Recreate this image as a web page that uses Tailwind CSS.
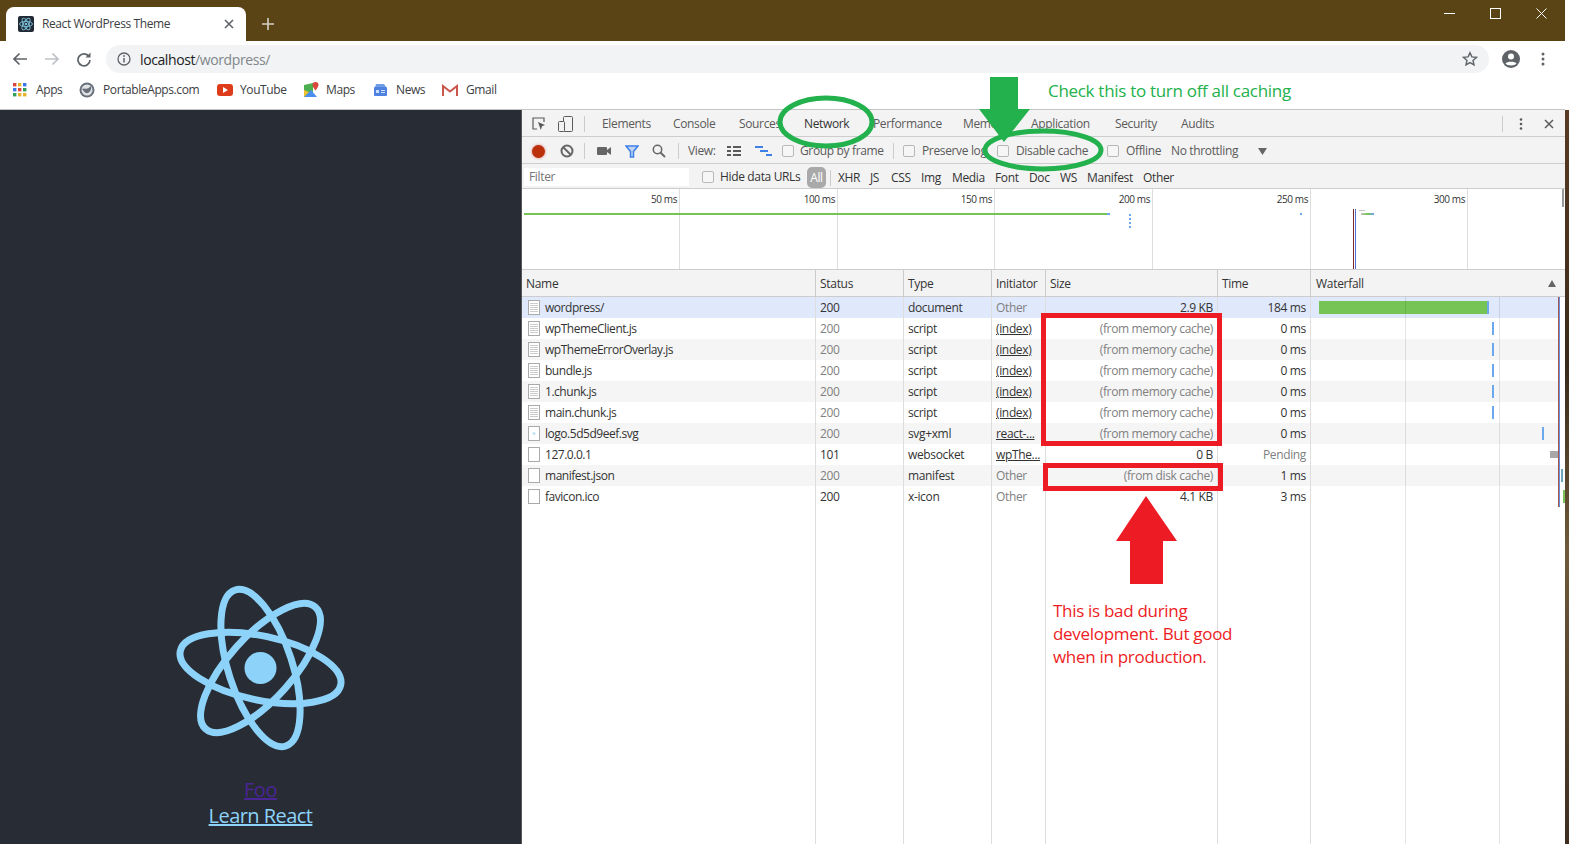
<!DOCTYPE html>
<html>
<head>
<meta charset="utf-8">
<script src="https://cdn.jsdelivr.net/npm/@tailwindcss/browser@4"></script>
</head>
<body class="m-0 bg-white">
<div class="relative w-[1569px] h-[844px] overflow-hidden bg-white font-['Open_Sans','Noto_Sans',sans-serif] text-[12px] text-[#333]">

  <!-- Title bar -->
  <div class="flex h-[41px] w-[1565px] bg-[#5a4415]">
    <div class="ml-[6px] mt-[7px] flex h-[34px] w-[240px] items-center rounded-t-[8px] bg-white pl-[12px] pr-[12px]">
      <svg width="16" height="16" viewBox="0 0 16 16" class="shrink-0"><rect width="16" height="16" rx="2" fill="#222b35"/><g fill="none" stroke="#7cc4dd" stroke-width="0.9"><ellipse cx="8" cy="8" rx="6.5" ry="2.6"/><ellipse cx="8" cy="8" rx="6.5" ry="2.6" transform="rotate(60 8 8)"/><ellipse cx="8" cy="8" rx="6.5" ry="2.6" transform="rotate(120 8 8)"/></g><circle cx="8" cy="8" r="1.3" fill="#7cc4dd"/></svg>
      <span class="ml-[8px] flex-1 whitespace-nowrap text-[12px] tracking-[-0.4px] text-[#3c4043]">React WordPress Theme</span>
      <svg width="10" height="10" viewBox="0 0 10 10"><path d="M1 1l8 8M9 1l-8 8" stroke="#5f6368" stroke-width="1.6"/></svg>
    </div>
    <div class="ml-[15px] mt-[17px]">
      <svg width="14" height="14" viewBox="0 0 14 14"><path d="M7 1v12M1 7h12" stroke="#d5d0c5" stroke-width="1.6"/></svg>
    </div>
    <div class="ml-auto flex h-[28px] items-center gap-[35px] pr-[18px] pb-[2px]">
      <svg width="11" height="11" viewBox="0 0 11 11"><path d="M0 5.5h11" stroke="#fff" stroke-width="1"/></svg>
      <svg width="11" height="11" viewBox="0 0 11 11"><rect x="0.5" y="0.5" width="10" height="10" fill="none" stroke="#fff"/></svg>
      <svg width="11" height="11" viewBox="0 0 11 11"><path d="M0.5 0.5l10 10M10.5 0.5l-10 10" stroke="#fff" stroke-width="1"/></svg>
    </div>
  </div>

  <!-- Address toolbar -->
  <div class="flex h-[36px] w-[1565px] items-center bg-white">
    <svg class="ml-[12px]" width="16" height="16" viewBox="0 0 16 16"><path d="M15 8H2M7.500 2.500 2 8l5.500 5.500" fill="none" stroke="#5f6368" stroke-width="1.700"/></svg>
    <svg class="ml-[16px]" width="16" height="16" viewBox="0 0 16 16"><path d="M1 8h13M8.500 2.500 14 8l-5.500 5.500" fill="none" stroke="#bdc1c6" stroke-width="1.700"/></svg>
    <svg class="ml-[16px]" width="16" height="16" viewBox="0 0 16 16"><path d="M13 5.500A6 6 0 1 0 14 9" fill="none" stroke="#5f6368" stroke-width="1.700"/><path d="M14.500 1.500v5h-5z" fill="#5f6368"/></svg>
    <div class="ml-[14px] flex h-[28px] w-[1383px] items-center rounded-full bg-[#f1f3f4] pl-[11px] pr-[11px]">
      <svg width="14" height="14" viewBox="0 0 14 14"><circle cx="7" cy="7" r="6" fill="none" stroke="#5f6368" stroke-width="1.300"/><path d="M7 6v4.500" stroke="#5f6368" stroke-width="1.500"/><circle cx="7" cy="4" r="0.900" fill="#5f6368"/></svg>
      <span class="ml-[9px] text-[14px] tracking-[-0.4px] text-[#202124]">localhost<span class="text-[#80868b]">/wordpress/</span></span>
      <svg class="ml-auto" width="16" height="16" viewBox="0 0 16 16"><path d="M8 1.700l1.900 4.200 4.500.5-3.400 3 1 4.500L8 11.600l-4 2.300 1-4.500-3.400-3 4.500-.5z" fill="none" stroke="#5f6368" stroke-width="1.400"/></svg>
    </div>
    <svg class="ml-[13px]" width="18" height="18" viewBox="0 0 18 18"><circle cx="9" cy="9" r="9" fill="#5f6368"/><circle cx="9" cy="6.500" r="3" fill="#fff"/><path d="M3.500 13.500c1.500-2.500 9.500-2.500 11 0C13 16 5 16 3.500 13.500z" fill="#fff"/></svg>
    <svg class="ml-[21px]" width="4" height="16" viewBox="0 0 4 16"><circle cx="2" cy="3" r="1.500" fill="#5f6368"/><circle cx="2" cy="8" r="1.500" fill="#5f6368"/><circle cx="2" cy="13" r="1.500" fill="#5f6368"/></svg>
  </div>

  <!-- Bookmarks -->
  <div class="flex h-[33px] w-[1565px] items-center border-b border-[#c4c4c4] pb-[6px] pl-[13px] text-[12px] tracking-[-0.4px] text-[#3c4043]">
    <svg width="14" height="14" viewBox="0 0 14 14"><rect x="0" y="0" width="3.400" height="3.400" fill="#d9453d"/><rect x="5" y="0" width="3.400" height="3.400" fill="#e8b12a"/><rect x="10" y="0" width="3.400" height="3.400" fill="#3b78e7"/><rect x="0" y="5" width="3.400" height="3.400" fill="#3b78e7"/><rect x="5" y="5" width="3.400" height="3.400" fill="#d9453d"/><rect x="10" y="5" width="3.400" height="3.400" fill="#2f9e58"/><rect x="0" y="10" width="3.400" height="3.400" fill="#2f9e58"/><rect x="5" y="10" width="3.400" height="3.400" fill="#e8b12a"/><rect x="10" y="10" width="3.400" height="3.400" fill="#e8b12a"/></svg>
    <span class="ml-[9px] w-[43px]">Apps</span>
    <svg width="16" height="16" viewBox="0 0 16 16"><circle cx="8" cy="8" r="7.500" fill="#68717a"/><circle cx="8" cy="8" r="5.500" fill="#dfe3e6"/><path d="M3 7c3-2 4 2 9-3 1 4-2 8-5 7-2-.7-3-3-4-4z" fill="#68717a"/></svg>
    <span class="ml-[8px] w-[114px]">PortableApps.com</span>
    <svg width="16" height="12" viewBox="0 0 16 12"><rect width="16" height="12" rx="3" fill="#dd3b1a"/><path d="M6 3l5 3-5 3z" fill="#fff"/></svg>
    <span class="ml-[7px] w-[63px]">YouTube</span>
    <svg width="16" height="16" viewBox="0 0 16 16"><path d="M1 3l9-2v14H1z" fill="#4caf50"/><path d="M1 15l7-7 6 7z" fill="#4a8ef0"/><path d="M1 8l5 2-5 5z" fill="#f2c12e"/><path d="M12.500 0a3 3 0 0 1 3 3c0 2-3 5.500-3 5.500S9.500 5 9.500 3a3 3 0 0 1 3-3z" fill="#d8493c"/></svg>
    <span class="ml-[7px] w-[47px]">Maps</span>
    <svg width="15" height="15" viewBox="0 0 15 15"><path d="M3 1h8l2 3H2z" fill="#6f9de8"/><rect x="1" y="4" width="13" height="9" rx="1" fill="#4e81e0"/><rect x="3" y="7" width="3" height="3" fill="#cfe0ff"/><rect x="8" y="7" width="4" height="1" fill="#cfe0ff"/><rect x="8" y="9" width="4" height="1" fill="#cfe0ff"/></svg>
    <span class="ml-[8px] w-[46px]">News</span>
    <svg width="16" height="13" viewBox="0 0 16 13"><path d="M1 12V2l7 5.500L15 2v10" fill="none" stroke="#c9564b" stroke-width="2"/></svg>
    <span class="ml-[8px]">Gmail</span>
  </div>

  <!-- Page body -->
  <div class="flex h-[734px] w-[1569px]">
    <!-- App -->
    <div class="flex w-[521px] shrink-0 flex-col items-center bg-[#282c34]">
      <svg class="mt-[473px]" width="176" height="170" viewBox="0 0 176 170">
        <g fill="none" stroke="#8dd3f9" stroke-width="7">
          <ellipse cx="87.500" cy="85" rx="82" ry="32" transform="rotate(12 87.500 85)"/>
          <ellipse cx="87.500" cy="85" rx="82" ry="32" transform="rotate(72 87.500 85)"/>
          <ellipse cx="87.500" cy="85" rx="82" ry="32" transform="rotate(132 87.500 85)"/>
        </g>
        <circle cx="87.500" cy="85" r="16" fill="#8dd3f9"/>
      </svg>
      <a class="mt-[24px] text-[20px] leading-[26px] tracking-[-0.5px] text-[#4a2596] underline">Foo</a>
      <a class="text-[20px] leading-[26px] tracking-[-0.55px] text-[#8dd3f9] underline">Learn React</a>
    </div>

    <!-- DevTools -->
    <div class="flex w-[1044px] flex-col border-l border-[#555] bg-white">
      <!-- tabs -->
      <div class="flex h-[27px] items-center border-b border-[#cdcdcd] bg-[#f3f3f3] pt-[2px] text-[12px] tracking-[-0.35px] text-[#5a5a5a]">
        <svg class="ml-[10px]" width="14" height="14" viewBox="0 0 14 14"><path d="M12 5V1H1v11h4" fill="none" stroke="#5a5a5a" stroke-width="1.200"/><path d="M6 5l7 3-3 1.200L8.800 13z" fill="#5a5a5a"/></svg>
        <svg class="ml-[12px]" width="15" height="16" viewBox="0 0 15 16"><rect x="5.500" y="0.500" width="9" height="15" rx="1" fill="none" stroke="#5a5a5a"/><rect x="0.500" y="5.500" width="6" height="10" rx="1" fill="#f3f3f3" stroke="#5a5a5a"/></svg>
        <div class="ml-[11px] h-[16px] w-px bg-[#ccc]"></div>
        <span class="ml-[17px] w-[71px]">Elements</span>
        <span class="w-[66px]">Console</span>
        <span class="w-[65px]">Sources</span>
        <span class="w-[69px] text-[#333]">Network</span>
        <span class="w-[90px]">Performance</span>
        <span class="w-[68px]">Memory</span>
        <span class="w-[84px]">Application</span>
        <span class="w-[66px]">Security</span>
        <span class="w-[40px]">Audits</span>
        <div class="ml-[281px] h-[16px] w-px bg-[#ccc]"></div>
        <svg class="ml-[16px]" width="4" height="14" viewBox="0 0 4 14"><circle cx="2" cy="2.500" r="1.300" fill="#5a5a5a"/><circle cx="2" cy="7" r="1.300" fill="#5a5a5a"/><circle cx="2" cy="11.500" r="1.300" fill="#5a5a5a"/></svg>
        <svg class="ml-[21px]" width="10" height="10" viewBox="0 0 10 10"><path d="M1 1l8 8M9 1l-8 8" stroke="#5a5a5a" stroke-width="1.500"/></svg>
      </div>

      <!-- network toolbar -->
      <div class="flex h-[27px] items-center border-b border-[#cdcdcd] bg-[#f3f3f3] pt-[2px] text-[12px] tracking-[-0.35px] text-[#5a5a5a]">
        <div class="ml-[10px] h-[13px] w-[13px] rounded-full bg-[#bb2f0b] shadow-[0_0_3px_#d77]"></div>
        <svg class="ml-[15px]" width="14" height="14" viewBox="0 0 14 14"><circle cx="7" cy="7" r="5.500" fill="none" stroke="#666" stroke-width="2"/><path d="M3 3l8 8" stroke="#666" stroke-width="2"/></svg>
        <div class="ml-[10px] h-[16px] w-px bg-[#ccc]"></div>
        <svg class="ml-[12px]" width="14" height="10" viewBox="0 0 14 10"><rect x="0" y="1" width="10" height="8" rx="1" fill="#666"/><path d="M10 4l4-3v8l-4-3z" fill="#666"/></svg>
        <svg class="ml-[14px]" width="14" height="13" viewBox="0 0 14 13"><path d="M1 1h12L8.500 6.500V12h-3V6.500z" fill="#bcd3f5" stroke="#3f80e6" stroke-width="1.500"/></svg>
        <svg class="ml-[13px]" width="14" height="14" viewBox="0 0 14 14"><circle cx="5.500" cy="5.500" r="4.200" fill="none" stroke="#666" stroke-width="1.500"/><path d="M8.500 8.500L13 13" stroke="#666" stroke-width="1.800"/></svg>
        <div class="ml-[12px] h-[16px] w-px bg-[#ccc]"></div>
        <span class="ml-[9px] w-[39px]">View:</span>
        <svg width="14" height="10" viewBox="0 0 14 10"><path d="M0 0h4v2H0zM6 0h8v2H6zM0 4h4v2H0zM6 4h8v2H6zM0 8h4v2H0zM6 8h8v2H6z" fill="#5a5a5a"/></svg>
        <svg class="ml-[14px]" width="17" height="11" viewBox="0 0 17 11"><path d="M0 0h8v2H0zM5 4h8v2H5zM11 8h6v2h-6z" fill="#3f80e6"/></svg>
        <div class="ml-[10px] h-[12px] w-[12px] rounded-[2px] border border-[#b8b8b8] bg-[#f6f6f6]"></div>
        <span class="ml-[6px] w-[93px]">Group by frame</span>
        <div class="h-[16px] w-px bg-[#ccc]"></div>
        <div class="ml-[9px] h-[12px] w-[12px] rounded-[2px] border border-[#b8b8b8] bg-[#f6f6f6]"></div>
        <span class="ml-[7px] w-[75px] overflow-hidden whitespace-nowrap">Preserve log</span>
        <div class="h-[12px] w-[12px] rounded-[2px] border border-[#b8b8b8] bg-[#f6f6f6]"></div>
        <span class="ml-[7px] w-[91px]">Disable cache</span>
        <div class="h-[12px] w-[12px] rounded-[2px] border border-[#b8b8b8] bg-[#f6f6f6]"></div>
        <span class="ml-[7px] w-[45px]">Offline</span>
        <span class="w-[87px]">No throttling</span>
        <svg width="9" height="7" viewBox="0 0 9 7"><path d="M0 0h9L4.500 7z" fill="#666"/></svg>
      </div>

      <!-- filter bar -->
      <div class="flex h-[25px] items-center border-b border-[#cdcdcd] bg-[#f3f3f3] pt-[3px] text-[12px] tracking-[-0.35px] text-[#333]">
        <div class="ml-[2px] -mt-[1px] flex h-[18px] w-[165px] items-center bg-white pl-[5px] text-[#757575]">Filter</div>
        <div class="ml-[13px] -mt-[2px] h-[12px] w-[12px] rounded-[2px] border border-[#b8b8b8] bg-[#f6f6f6]"></div>
        <span class="ml-[6px] w-[87px] -mt-[1px]">Hide data URLs</span>
        <span class="flex h-[21px] w-[19px] items-center justify-center rounded-[5px] bg-[#a9a9a9] text-white">All</span>
        <div class="ml-[4px] h-[16px] w-px bg-[#ccc]"></div>
        <span class="ml-[7px] w-[32px]">XHR</span>
        <span class="w-[21px]">JS</span>
        <span class="w-[30px]">CSS</span>
        <span class="w-[31px]">Img</span>
        <span class="w-[43px]">Media</span>
        <span class="w-[34px]">Font</span>
        <span class="w-[31px]">Doc</span>
        <span class="w-[27px]">WS</span>
        <span class="w-[56px]">Manifest</span>
        <span>Other</span>
      </div>

      <!-- overview -->
      <div class="relative grid h-[81px] grid-cols-[158px_158px_157px_158px_158px_157px_1fr] border-b border-[#cdcdcd] bg-white text-right text-[10px] tracking-[-0.4px] text-[#333]">
        <div class="border-r border-[#ddd] pr-[2px] pt-[3px]">50 ms</div>
        <div class="border-r border-[#ddd] pr-[2px] pt-[3px]">100 ms</div>
        <div class="border-r border-[#ddd] pr-[2px] pt-[3px]">150 ms</div>
        <div class="border-r border-[#ddd] pr-[2px] pt-[3px]">200 ms</div>
        <div class="border-r border-[#ddd] pr-[2px] pt-[3px]">250 ms</div>
        <div class="border-r border-[#ddd] pr-[2px] pt-[3px]">300 ms</div>
        <div></div>
        <div class="absolute left-[2px] top-[24px] h-[2px] w-[583px] bg-[#76c456]"></div>
        <div class="absolute left-[585px] top-[24px] h-[2px] w-[3px] bg-[#6ba8ee]"></div>
        <div class="absolute left-[607px] top-[25px] h-[14px] w-[2px] bg-[repeating-linear-gradient(#6ba8ee_0_2px,transparent_2px_4px)]"></div>
        <div class="absolute left-[778px] top-[24px] h-[2px] w-[2px] bg-[#6ba8ee]"></div>
        <div class="absolute left-[831px] top-[20px] h-[60px] w-px bg-[#7a2a2a]"></div>
        <div class="absolute left-[833px] top-[20px] h-[60px] w-px bg-[#4f6fd0]"></div>
        <div class="absolute left-[837px] top-[21px] h-px w-[6px] bg-[#c4c4c4]"></div>
        <div class="absolute left-[839px] top-[24px] h-[2px] w-[13px] bg-[linear-gradient(90deg,#c4c4c4,#76c456,#6ba8ee)]"></div>
        <div class="absolute right-[1px] top-0 h-[18px] w-[2px] bg-[#999]"></div>
      </div>

      <!-- table -->
      <div class="relative flex flex-1 flex-col overflow-hidden">
        <!-- header -->
        <div class="grid h-[27px] grid-cols-[294px_88px_88px_54px_172px_93px_1fr] items-stretch border-b border-[#cdcdcd] bg-[#f3f3f3] leading-[27px] tracking-[-0.3px] text-[#333]">
          <div class="border-r border-[#ccc] pl-[4px]">Name</div>
          <div class="border-r border-[#ccc] pl-[4px]">Status</div>
          <div class="border-r border-[#ccc] pl-[4px]">Type</div>
          <div class="border-r border-[#ccc] pl-[4px]">Initiator</div>
          <div class="border-r border-[#ccc] pl-[4px]">Size</div>
          <div class="border-r border-[#ccc] pl-[4px]">Time</div>
          <div class="relative pl-[5px]">Waterfall<svg class="absolute right-[9px] top-[10px]" width="8" height="7" viewBox="0 0 8 7"><path d="M0 7h8L4 0z" fill="#666"/></svg></div>
        </div>

        <div class="grid h-[21px] grid-cols-[294px_88px_88px_54px_172px_93px_1fr] bg-[#dfe9fb] leading-[21px] tracking-[-0.35px]">
          <div class="flex items-center border-r border-[#ddd] pl-[6px]"><svg width="12" height="15" viewBox="0 0 12 15"><rect x="0.500" y="0.500" width="11" height="14" fill="#fff" stroke="#aaa"/><path d="M2 3.500h8M2 5.500h8M2 7.500h8M2 9.500h8M2 11.500h8" stroke="#ccc"/></svg><span class="ml-[5px] tracking-[-0.47px]">wordpress/</span></div>
          <div class="border-r border-[#ddd] pl-[4px]">200</div>
          <div class="border-r border-[#ddd] pl-[4px]">document</div>
          <div class="border-r border-[#ddd] pl-[4px] text-[#808080]">Other</div>
          <div class="border-r border-[#ddd] pr-[4px] text-right">2.9 KB</div>
          <div class="border-r border-[#ddd] pr-[4px] text-right">184 ms</div>
          <div class="relative"><div class="absolute left-[8px] top-[4px] h-[13px] w-[168px] bg-[#76c456]"></div><div class="absolute left-[176px] top-[4px] h-[13px] w-[2px] bg-[#6ba8ee]"></div></div>
        </div>

        <div class="grid h-[21px] grid-cols-[294px_88px_88px_54px_172px_93px_1fr] bg-white leading-[21px] tracking-[-0.35px]">
          <div class="flex items-center border-r border-[#ddd] pl-[6px]"><svg width="12" height="15" viewBox="0 0 12 15"><rect x="0.500" y="0.500" width="11" height="14" fill="#fff" stroke="#aaa"/><path d="M2 3.500h8M2 5.500h8M2 7.500h8M2 9.500h8M2 11.500h8" stroke="#ccc"/></svg><span class="ml-[5px] tracking-[-0.47px]">wpThemeClient.js</span></div>
          <div class="border-r border-[#ddd] pl-[4px] text-[#808080]">200</div>
          <div class="border-r border-[#ddd] pl-[4px]">script</div>
          <div class="border-r border-[#ddd] pl-[4px] underline">(index)</div>
          <div class="border-r border-[#ddd] pr-[4px] text-right text-[#808080]">(from memory cache)</div>
          <div class="border-r border-[#ddd] pr-[4px] text-right">0 ms</div>
          <div class="relative"><div class="absolute left-[181px] top-[4px] h-[13px] w-[2px] bg-[#6ba8ee]"></div></div>
        </div>

        <div class="grid h-[21px] grid-cols-[294px_88px_88px_54px_172px_93px_1fr] bg-[#f5f5f5] leading-[21px] tracking-[-0.35px]">
          <div class="flex items-center border-r border-[#ddd] pl-[6px]"><svg width="12" height="15" viewBox="0 0 12 15"><rect x="0.500" y="0.500" width="11" height="14" fill="#fff" stroke="#aaa"/><path d="M2 3.500h8M2 5.500h8M2 7.500h8M2 9.500h8M2 11.500h8" stroke="#ccc"/></svg><span class="ml-[5px] tracking-[-0.47px]">wpThemeErrorOverlay.js</span></div>
          <div class="border-r border-[#ddd] pl-[4px] text-[#808080]">200</div>
          <div class="border-r border-[#ddd] pl-[4px]">script</div>
          <div class="border-r border-[#ddd] pl-[4px] underline">(index)</div>
          <div class="border-r border-[#ddd] pr-[4px] text-right text-[#808080]">(from memory cache)</div>
          <div class="border-r border-[#ddd] pr-[4px] text-right">0 ms</div>
          <div class="relative"><div class="absolute left-[181px] top-[4px] h-[13px] w-[2px] bg-[#6ba8ee]"></div></div>
        </div>

        <div class="grid h-[21px] grid-cols-[294px_88px_88px_54px_172px_93px_1fr] bg-white leading-[21px] tracking-[-0.35px]">
          <div class="flex items-center border-r border-[#ddd] pl-[6px]"><svg width="12" height="15" viewBox="0 0 12 15"><rect x="0.500" y="0.500" width="11" height="14" fill="#fff" stroke="#aaa"/><path d="M2 3.500h8M2 5.500h8M2 7.500h8M2 9.500h8M2 11.500h8" stroke="#ccc"/></svg><span class="ml-[5px] tracking-[-0.47px]">bundle.js</span></div>
          <div class="border-r border-[#ddd] pl-[4px] text-[#808080]">200</div>
          <div class="border-r border-[#ddd] pl-[4px]">script</div>
          <div class="border-r border-[#ddd] pl-[4px] underline">(index)</div>
          <div class="border-r border-[#ddd] pr-[4px] text-right text-[#808080]">(from memory cache)</div>
          <div class="border-r border-[#ddd] pr-[4px] text-right">0 ms</div>
          <div class="relative"><div class="absolute left-[181px] top-[4px] h-[13px] w-[2px] bg-[#6ba8ee]"></div></div>
        </div>

        <div class="grid h-[21px] grid-cols-[294px_88px_88px_54px_172px_93px_1fr] bg-[#f5f5f5] leading-[21px] tracking-[-0.35px]">
          <div class="flex items-center border-r border-[#ddd] pl-[6px]"><svg width="12" height="15" viewBox="0 0 12 15"><rect x="0.500" y="0.500" width="11" height="14" fill="#fff" stroke="#aaa"/><path d="M2 3.500h8M2 5.500h8M2 7.500h8M2 9.500h8M2 11.500h8" stroke="#ccc"/></svg><span class="ml-[5px] tracking-[-0.47px]">1.chunk.js</span></div>
          <div class="border-r border-[#ddd] pl-[4px] text-[#808080]">200</div>
          <div class="border-r border-[#ddd] pl-[4px]">script</div>
          <div class="border-r border-[#ddd] pl-[4px] underline">(index)</div>
          <div class="border-r border-[#ddd] pr-[4px] text-right text-[#808080]">(from memory cache)</div>
          <div class="border-r border-[#ddd] pr-[4px] text-right">0 ms</div>
          <div class="relative"><div class="absolute left-[181px] top-[4px] h-[13px] w-[2px] bg-[#6ba8ee]"></div></div>
        </div>

        <div class="grid h-[21px] grid-cols-[294px_88px_88px_54px_172px_93px_1fr] bg-white leading-[21px] tracking-[-0.35px]">
          <div class="flex items-center border-r border-[#ddd] pl-[6px]"><svg width="12" height="15" viewBox="0 0 12 15"><rect x="0.500" y="0.500" width="11" height="14" fill="#fff" stroke="#aaa"/><path d="M2 3.500h8M2 5.500h8M2 7.500h8M2 9.500h8M2 11.500h8" stroke="#ccc"/></svg><span class="ml-[5px] tracking-[-0.47px]">main.chunk.js</span></div>
          <div class="border-r border-[#ddd] pl-[4px] text-[#808080]">200</div>
          <div class="border-r border-[#ddd] pl-[4px]">script</div>
          <div class="border-r border-[#ddd] pl-[4px] underline">(index)</div>
          <div class="border-r border-[#ddd] pr-[4px] text-right text-[#808080]">(from memory cache)</div>
          <div class="border-r border-[#ddd] pr-[4px] text-right">0 ms</div>
          <div class="relative"><div class="absolute left-[181px] top-[4px] h-[13px] w-[2px] bg-[#6ba8ee]"></div></div>
        </div>

        <div class="grid h-[21px] grid-cols-[294px_88px_88px_54px_172px_93px_1fr] bg-[#f5f5f5] leading-[21px] tracking-[-0.35px]">
          <div class="flex items-center border-r border-[#ddd] pl-[6px]"><svg width="12" height="15" viewBox="0 0 12 15"><rect x="0.500" y="0.500" width="11" height="14" fill="#fff" stroke="#aaa"/><circle cx="6" cy="7.500" r="1.500" fill="#bfe3f7"/></svg><span class="ml-[5px] tracking-[-0.47px]">logo.5d5d9eef.svg</span></div>
          <div class="border-r border-[#ddd] pl-[4px] text-[#808080]">200</div>
          <div class="border-r border-[#ddd] pl-[4px]">svg+xml</div>
          <div class="overflow-hidden border-r border-[#ddd] pl-[4px] underline whitespace-nowrap">react-...</div>
          <div class="border-r border-[#ddd] pr-[4px] text-right text-[#808080]">(from memory cache)</div>
          <div class="border-r border-[#ddd] pr-[4px] text-right">0 ms</div>
          <div class="relative"><div class="absolute left-[231px] top-[4px] h-[13px] w-[2px] bg-[#6ba8ee]"></div></div>
        </div>

        <div class="grid h-[21px] grid-cols-[294px_88px_88px_54px_172px_93px_1fr] bg-white leading-[21px] tracking-[-0.35px]">
          <div class="flex items-center border-r border-[#ddd] pl-[6px]"><svg width="12" height="15" viewBox="0 0 12 15"><rect x="0.500" y="0.500" width="11" height="14" fill="#fff" stroke="#aaa"/></svg><span class="ml-[5px] tracking-[-0.47px]">127.0.0.1</span></div>
          <div class="border-r border-[#ddd] pl-[4px]">101</div>
          <div class="border-r border-[#ddd] pl-[4px]">websocket</div>
          <div class="overflow-hidden border-r border-[#ddd] pl-[4px] underline whitespace-nowrap">wpThe...</div>
          <div class="border-r border-[#ddd] pr-[4px] text-right">0 B</div>
          <div class="border-r border-[#ddd] pr-[4px] text-right text-[#808080]">Pending</div>
          <div class="relative"><div class="absolute left-[239px] top-[7px] h-[7px] w-[8px] bg-[#a8a8a8]"></div></div>
        </div>

        <div class="grid h-[21px] grid-cols-[294px_88px_88px_54px_172px_93px_1fr] bg-[#f5f5f5] leading-[21px] tracking-[-0.35px]">
          <div class="flex items-center border-r border-[#ddd] pl-[6px]"><svg width="12" height="15" viewBox="0 0 12 15"><rect x="0.500" y="0.500" width="11" height="14" fill="#fff" stroke="#aaa"/></svg><span class="ml-[5px] tracking-[-0.47px]">manifest.json</span></div>
          <div class="border-r border-[#ddd] pl-[4px] text-[#808080]">200</div>
          <div class="border-r border-[#ddd] pl-[4px]">manifest</div>
          <div class="border-r border-[#ddd] pl-[4px] text-[#808080]">Other</div>
          <div class="border-r border-[#ddd] pr-[4px] text-right text-[#808080]">(from disk cache)</div>
          <div class="border-r border-[#ddd] pr-[4px] text-right">1 ms</div>
          <div class="relative"></div>
        </div>

        <div class="grid h-[21px] grid-cols-[294px_88px_88px_54px_172px_93px_1fr] bg-white leading-[21px] tracking-[-0.35px]">
          <div class="flex items-center border-r border-[#ddd] pl-[6px]"><svg width="12" height="15" viewBox="0 0 12 15"><rect x="0.500" y="0.500" width="11" height="14" fill="#fff" stroke="#aaa"/></svg><span class="ml-[5px] tracking-[-0.47px]">favicon.ico</span></div>
          <div class="border-r border-[#ddd] pl-[4px]">200</div>
          <div class="border-r border-[#ddd] pl-[4px]">x-icon</div>
          <div class="border-r border-[#ddd] pl-[4px] text-[#808080]">Other</div>
          <div class="border-r border-[#ddd] pr-[4px] text-right">4.1 KB</div>
          <div class="border-r border-[#ddd] pr-[4px] text-right">3 ms</div>
          <div class="relative"></div>
        </div>

        <div class="grid flex-1 grid-cols-[294px_88px_88px_54px_172px_93px_1fr]">
          <div class="border-r border-[#ddd]"></div>
          <div class="border-r border-[#ddd]"></div>
          <div class="border-r border-[#ddd]"></div>
          <div class="border-r border-[#ddd]"></div>
          <div class="border-r border-[#ddd]"></div>
          <div class="border-r border-[#ddd]"></div>
          <div></div>
        </div>

        <!-- waterfall grid lines -->
        <div class="pointer-events-none absolute bottom-0 left-[883px] top-[27px] w-px bg-black/10"></div>
        <div class="pointer-events-none absolute bottom-0 left-[977px] top-[27px] w-px bg-black/10"></div>
        <div class="pointer-events-none absolute left-[1036px] top-[27px] h-[210px] w-px bg-[#a05a50]"></div>
        <div class="pointer-events-none absolute left-[1037px] top-[27px] h-[210px] w-px bg-[#6a8fe0]"></div>
        <!-- scrollbar gutter -->
        <div class="pointer-events-none absolute bottom-0 left-[1038px] right-0 top-[27px] bg-white">
          <div class="absolute left-[1px] top-[172px] h-[13px] w-[2px] bg-[#6ba8c0]"></div>
          <div class="absolute left-[3px] top-[193px] h-[13px] w-[2px] bg-[#76c456]"></div>
        </div>
      </div>
    </div>
    <div class="w-[4px] bg-[linear-gradient(#5a3a22,#3a2a1a_35%,#6e5a3a_60%,#3d2d20)]"></div>
  </div>

  <!-- Annotations -->
  <svg class="pointer-events-none absolute left-0 top-0" width="1569" height="844" viewBox="0 0 1569 844">
    <ellipse cx="826" cy="122" rx="46" ry="24" fill="none" stroke="#22b14c" stroke-width="5"/>
    <ellipse cx="1043" cy="150" rx="58" ry="19" fill="none" stroke="#22b14c" stroke-width="5"/>
    <path d="M990 77h28v32h12l-26 33-25-33h11z" fill="#22b14c"/>
    <path d="M1146 496l31 45h-14v43h-33v-43h-14z" fill="#ed1c24"/>
    <rect x="1043.500" y="315.500" width="176" height="128" fill="none" stroke="#ed1c24" stroke-width="5"/>
    <rect x="1045.500" y="465.500" width="175" height="23" fill="none" stroke="#ed1c24" stroke-width="5"/>
  </svg>
  <div class="absolute left-[1048px] top-[79px] whitespace-nowrap text-[17px] leading-[24px] tracking-[-0.3px] text-[#22b14c]">Check this to turn off all caching</div>
  <div class="absolute left-[1053px] top-[599px] w-[190px] text-[17px] leading-[23px] tracking-[-0.3px] text-[#ed1c24]">This is bad during development. But good when in production.</div>
</div>
</body>
</html>
